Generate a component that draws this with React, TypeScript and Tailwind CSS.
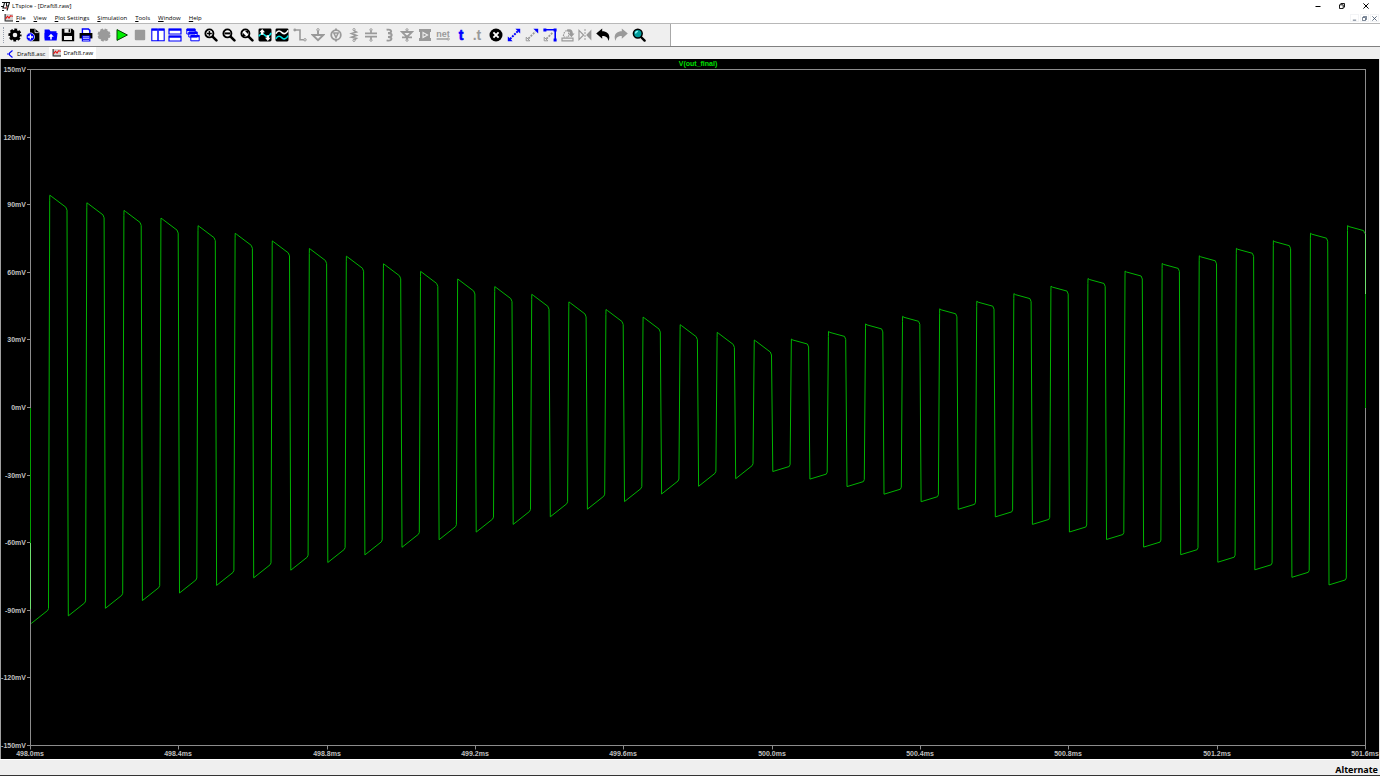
import type { ReactNode } from "react";
import { clsx } from "clsx";

const BLUE = "#0000ff";
const GREY = "#9a9a9a";

const menus = ["File", "View", "Plot Settings", "Simulation", "Tools", "Window", "Help"];

type Tool = { label: string; icon: ReactNode; disabled?: boolean };

function Lens({ children }: { children?: ReactNode }) {
  return (
    <>
      <circle cx="5.4" cy="5.4" r="4" fill="#fff" stroke="#000" strokeWidth="1.9" />
      <path d="M8.6 8.6 12.4 12.4" stroke="#000" strokeWidth="2.6" strokeLinecap="round" />
      {children}
    </>
  );
}

const tools: Tool[] = [
  {
    label: "Settings",
    icon: (
      <>
        <circle cx="7" cy="7" r="3.8" fill="none" stroke="#000" strokeWidth="3" />
        <circle cx="7" cy="7" r="5.5" fill="none" stroke="#000" strokeWidth="2.2" strokeDasharray="2.7 1.62" strokeDashoffset="1.3" />
      </>
    ),
  },
  {
    label: "New Schematic",
    icon: (
      <>
        <path d="M4 .8h5l4.4 3.6v8.8H4z" fill="#000" />
        <path d="M9 1v3.6h3.8" fill="none" stroke="#efefef" strokeWidth=".8" />
        <circle cx="4.4" cy="9" r="4.2" fill={BLUE} stroke="#efefef" strokeWidth=".7" />
        <path d="M4.4 6.4v5.2M1.8 9H7" stroke="#fff" strokeWidth="1.3" />
      </>
    ),
  },
  {
    label: "Open",
    icon: (
      <>
        <path d="M.6 1.6h4.6l1.3 1.6h6V6H3L.6 11z" fill={BLUE} />
        <path d="M.6 12.6V5h13l-1 7.6z" fill={BLUE} />
        <path d="M7 11.4V7.6" stroke="#fff" strokeWidth="1.6" />
        <path d="M4.2 8.8 7 5.8l2.8 3z" fill="#fff" />
      </>
    ),
  },
  {
    label: "Save",
    icon: (
      <>
        <path d="M.8.8h10.4l2 2v10.4H.8z" fill="#000" />
        <path d="M3.4.8h6.4v4H3.4zM3 8h8v4H3z" fill="#efefef" />
        <path d="M7.6 1.2h1.4v3H7.6z" fill="#000" />
      </>
    ),
  },
  {
    label: "Print",
    icon: (
      <>
        <path d="M3.4 5V1h6l1.4 1.4V5" fill="#fff" stroke={BLUE} strokeWidth="1.4" />
        <path d="M.6 5h12.8v5.4H.6z" fill="#000" />
        <path d="M3.4 8h7.4v5H3.4z" fill="#fff" stroke={BLUE} strokeWidth="1.2" />
        <path d="M4 9.8h6M4 11.4h6" stroke={BLUE} />
      </>
    ),
  },
  {
    label: "Configure Analysis",
    disabled: true,
    icon: (
      <>
        <circle cx="7" cy="7" r="5.6" fill={GREY} />
        <circle cx="7" cy="7" r="5.7" fill="none" stroke={GREY} strokeWidth="1.6" strokeDasharray="2.8 1.68" />
      </>
    ),
  },
  {
    label: "Run",
    icon: <path d="M2 1.6 12.4 7 2 12.4z" fill="#00f000" stroke="#044004" strokeWidth="1" strokeLinejoin="round" />,
  },
  { label: "Stop", disabled: true, icon: <rect x="1.8" y="1.8" width="10.4" height="10.4" rx="1" fill={GREY} /> },
  {
    label: "Tile Vertically",
    icon: (
      <>
        <path d="M.8 1h6v11.8h-6zM7.2 1h6v11.8h-6z" fill="#fff" stroke={BLUE} strokeWidth="1.1" />
        <path d="M.8 1.8h5.6M7.6 1.8h5.6" stroke={BLUE} strokeWidth="2" />
      </>
    ),
  },
  {
    label: "Tile Horizontally",
    icon: (
      <>
        <path d="M1 1h12v5H1zM1 8h12v5H1z" fill="#fff" stroke={BLUE} strokeWidth="1.2" />
        <path d="M1 1.8h12M1 8.8h12" stroke={BLUE} strokeWidth="2" />
      </>
    ),
  },
  {
    label: "Cascade",
    icon: (
      <>
        <path d="M.8 1h8.4v5H.8zM2.8 4h8.4v5H2.8zM4.8 7.4h8.4v5.4H4.8z" fill="#fff" stroke={BLUE} />
        <path d="M.8 1.8h8.4M2.8 4.8h8.4M4.8 8.2h8.4" stroke={BLUE} strokeWidth="2.2" />
      </>
    ),
  },
  { label: "Zoom In", icon: <Lens><path d="M5.4 3v4.8M3 5.4h4.8" stroke="#000" strokeWidth="1.5" /></Lens> },
  { label: "Zoom Out", icon: <Lens><path d="M2.6 5.4h5.6" stroke="#000" strokeWidth="2" /></Lens> },
  {
    label: "Zoom to Fit",
    icon: (
      <Lens>
        <path d="M4.8 2.8H8V6zM2.8 4.8V8H6z" fill="#000" />
      </Lens>
    ),
  },
  {
    label: "Autorange",
    icon: (
      <>
        <rect x=".5" y=".5" width="13" height="13" rx="1.4" fill="#000" />
        <path d="M.8 8.4C3 4.6 5 5.4 7 7.4s4 1.4 6.2-2.4" fill="none" stroke="#00e0e0" strokeWidth="1.5" />
        <path d="M4.2 1 7 4.2H5.400v2.600H3V4.200H1.400zM9.800 13 7 9.800h1.600V7.200H11v2.600h1.600z" fill="#fff" />
      </>
    ),
  },
  {
    label: "Add Trace",
    icon: (
      <>
        <rect x=".5" y=".5" width="13" height="13" rx="1.4" fill="#000" />
        <path d="M.8 5.6C3 2 5 2.8 7 4.6s4 1.4 6.2-2.2" fill="none" stroke="#fff" strokeWidth="1.6" />
        <path d="M.8 10.8C3 7.2 5 8 7 9.8s4 1.4 6.2-2.2" fill="none" stroke="#00e0e0" strokeWidth="1.6" />
      </>
    ),
  },
  {
    label: "Wire",
    disabled: true,
    icon: (
      <>
        <path d="M2 2h5v9.8h5" fill="none" stroke={GREY} strokeWidth="1.6" />
        <circle cx="1.8" cy="2" r="1.4" fill={GREY} />
        <circle cx="12" cy="11.8" r="1.2" fill="#efefef" stroke={GREY} />
      </>
    ),
  },
  {
    label: "Ground",
    disabled: true,
    icon: (
      <>
        <path d="M7 2.4V7M1.6 7h10.8L7 12.2z" fill="none" stroke={GREY} strokeWidth="1.9" />
        <circle cx="7" cy="1.8" r="1.2" fill="#efefef" stroke={GREY} />
      </>
    ),
  },
  {
    label: "Voltage Source",
    disabled: true,
    icon: (
      <>
        <circle cx="7" cy="7" r="4.8" fill="none" stroke={GREY} strokeWidth="1.8" />
        <path d="M4.800 5h4.400L7 9.600z" fill="none" stroke={GREY} strokeWidth="1.500" />
        <path d="M7 .4v1.800M7 11.800v1.800" stroke={GREY} strokeWidth="2" />
      </>
    ),
  },
  {
    label: "Resistor",
    disabled: true,
    icon: (
      <>
        <path d="M7 2.6 9.4 4 4.6 5.600l4.800 1.800-4.800 1.800 4.800 1.200L7 12" fill="none" stroke={GREY} strokeWidth="1.6" />
        <circle cx="7" cy="1.6" r="1.1" fill="#efefef" stroke={GREY} />
        <circle cx="7" cy="12.4" r="1.1" fill="#efefef" stroke={GREY} />
      </>
    ),
  },
  {
    label: "Capacitor",
    disabled: true,
    icon: (
      <>
        <path d="M1 5.4h12M1 8.6h12M7 2.4v3M7 8.6v3" stroke={GREY} strokeWidth="1.7" />
        <circle cx="7" cy="1.8" r="1.1" fill="#efefef" stroke={GREY} />
        <circle cx="7" cy="12.2" r="1.1" fill="#efefef" stroke={GREY} />
      </>
    ),
  },
  {
    label: "Inductor",
    disabled: true,
    icon: (
      <path
        d="M4.6 1.8C10.4.6 10.4 5.4 6 5.2c5 0 5 3.8 0 3.8 5-.2 4.6 4.6-1.400 3.400"
        fill="none"
        stroke={GREY}
        strokeWidth="1.9"
      />
    ),
  },
  {
    label: "Diode",
    disabled: true,
    icon: (
      <>
        <path d="M2 4h10L7 9zM2 9.4h10M7 2.2v2M7 9.4v2" fill="none" stroke={GREY} strokeWidth="1.8" />
        <circle cx="7" cy="1.8" r="1.1" fill="#efefef" stroke={GREY} />
        <circle cx="7" cy="12.2" r="1.1" fill="#efefef" stroke={GREY} />
      </>
    ),
  },
  {
    label: "Component",
    disabled: true,
    icon: (
      <>
        <path d="M1 1h12v3h-1v6h1v3H1v-3h1V4H1z" fill={GREY} />
        <path d="M5 4.4 9.6 7 5 9.6z" fill={GREY} stroke="#efefef" strokeWidth="1.1" />
      </>
    ),
  },
  {
    label: "Net Name",
    disabled: true,
    icon: (
      <>
        <text x="7" y="8.6" textAnchor="middle" className="font-['Liberation_Sans'] text-[9px] font-bold" fill={GREY}>
          net
        </text>
        <path d="M.6 11h10.8" stroke={GREY} strokeWidth="1.4" />
        <circle cx="12.2" cy="11" r="1.1" fill="#efefef" stroke={GREY} />
      </>
    ),
  },
  {
    label: "Text",
    icon: (
      <text x="7" y="12" textAnchor="middle" className="font-['Liberation_Sans'] text-[14px] font-bold" fill={BLUE} stroke={BLUE} strokeWidth=".6">
        t
      </text>
    ),
  },
  {
    label: "SPICE Directive",
    disabled: true,
    icon: (
      <text x="6" y="12" textAnchor="middle" className="font-['Liberation_Sans'] text-[14px] font-bold" fill={GREY}>
        .t
      </text>
    ),
  },
  {
    label: "Delete",
    icon: (
      <>
        <circle cx="7" cy="7" r="6.5" fill="#000" />
        <path d="m4.4 4.4 5.2 5.2M9.6 4.4 4.4 9.6" stroke="#fff" strokeWidth="1.900" />
      </>
    ),
  },
  {
    label: "Move",
    icon: (
      <>
        <path d="m3 11 8-8" stroke={BLUE} strokeWidth="2" strokeDasharray="2 1" />
        <path d="M8.4.8h4.8v4.8zM.8 8.4v4.8h4.8z" fill={BLUE} />
      </>
    ),
  },
  {
    label: "Duplicate",
    icon: (
      <>
        <path d="m3.4 10.6 7-7" stroke={GREY} strokeWidth="1.8" strokeDasharray="2 1.2" />
        <path d="M8.4.8h4.8v4.8z" fill={BLUE} />
        <path d="M1.2 9.2v3.6h3.6z" fill="none" stroke={GREY} />
      </>
    ),
  },
  {
    label: "Drag",
    icon: (
      <>
        <path d="m3.4 10.8 6-6" stroke={GREY} strokeWidth="1.8" strokeDasharray="2 1.2" />
        <path d="M1.2 9.2v3.6h3.6z" fill="none" stroke={GREY} />
        <path d="M1.8 1.8h10.4v9.8" fill="none" stroke={BLUE} strokeWidth="1.6" />
        <path d="M.4.4h3v3h-3zM10.600.4h3v3h-3zM10.600 10.600h3v3h-3z" fill={BLUE} />
      </>
    ),
  },
  {
    label: "Rotate",
    disabled: true,
    icon: (
      <>
        <path d="M6 1.600c4.400-1.200 6 1.200 5.800 4h1.800L10.400 9.200 7.200 5.600H9C9 4 8 3.200 6 3.600z" fill={GREY} />
        <path d="M5.600 2.400C3.600 3.600 2.400 5.600 2.400 9h5.200V2.400" fill="none" stroke={GREY} strokeDasharray="1.600 1" strokeWidth="1.2" />
        <path d="M1 10.200h11v2.600H1z" fill="none" stroke={GREY} strokeWidth="1.2" />
      </>
    ),
  },
  {
    label: "Mirror",
    disabled: true,
    icon: (
      <>
        <path d="M1 2.4v9.2L5.6 7z" fill="none" stroke={GREY} strokeWidth="1.2" />
        <path d="M13.4 1.600v10.800L8.200 7z" fill={GREY} />
        <path d="M7 1v12" stroke={GREY} strokeDasharray="2 1" />
      </>
    ),
  },
  {
    label: "Undo",
    icon: <path d="M.2 5.400 6.200.4v2.800c5.800 0 8.800 4.400 6.200 9.800-.4-3.600-2.200-5-6.200-5v2.800z" fill="#000" />,
  },
  {
    label: "Redo",
    disabled: true,
    icon: <path d="M13.800 5.400 7.800.4v2.800C2 3.200-1 7.600 1.600 13c.4-3.600 2.200-5 6.200-5v2.800z" fill={GREY} />,
  },
  {
    label: "Find",
    icon: (
      <>
        <path d="m9 9 3.6 3.6" stroke="#000" strokeWidth="2.4" strokeLinecap="round" />
        <circle cx="5.8" cy="5.6" r="4.4" fill="#009c9c" stroke="#000" strokeWidth="1.5" />
        <path d="M3.6 5.6c0-1.4 1-2.2 2.2-2.2" fill="none" stroke="#9ff" strokeWidth="1.2" />
      </>
    ),
  },
];

function PlotIcon() {
  return (
    <svg viewBox="0 0 9 9" className="h-2 w-[9px] shrink-0" preserveAspectRatio="none" aria-hidden="true">
      <rect width="9" height="9" fill="#d4d4d4" />
      <path d="M1.2 0v7.8H9" fill="none" stroke="#222" />
      <path d="m1.500 5.500 2-3 1.500 2 1.500-2.500L9 2.500" fill="none" stroke="#e81010" strokeWidth="1.1" />
    </svg>
  );
}

// plot area in svg units
const LEFT = 30.5;
const RIGHT = 1365.5;
const TOP = 10.5;
const BOTTOM = 686.5;
const ZERO = 348.5;
const PERIOD = 37.08;

const yLabels = [150, 120, 90, 60, 30, 0, -30, -60, -90, -120, -150];
const xLabels = ["498.0", "498.4", "498.8", "499.2", "499.6", "500.0", "500.4", "500.8", "501.2", "501.6"];

const yPos = (mv: number) => Math.floor(ZERO - mv * 2.2533);
const xPos = (i: number) => Math.floor(LEFT + i * 148.33);

function tracePath() {
  const pts: [number, number][] = [];
  for (let k = 0; k < 36; k++) {
    const x = LEFT + 0.7 + k * PERIOD;
    const falling = k < 20;
    const low = falling ? 564.5 - k * 7.62 : 412.5 + (k - 20) * 7.56;
    const high = falling ? 136.2 + k * 7.62 : 280 - (k - 20) * 7.56;
    const lowDrop = falling ? 13 : 5;
    const highDrop = falling ? 13 : 6;
    pts.push([x, low], [x + 16.4, low - lowDrop], [x + 17.3, low - lowDrop - 2]);
    pts.push([x + 18.5, high + 5], [x + 18.6, high], [x + 20, high + 1]);
    pts.push([x + 34.6, high + highDrop - 1], [Math.min(x + 35.8, RIGHT), high + highDrop + 2]);
  }
  return "M" + pts.map(([x, y]) => `${x.toFixed(1)} ${y.toFixed(1)}`).join("L");
}

function Waveform() {
  return (
    <svg
      viewBox="0 0 1380 700"
      className="block w-full bg-black font-['Liberation_Sans',sans-serif] text-[7px] font-bold"
      role="img"
      aria-label="V(out_final)"
    >
      <path d="M.5 0v700" stroke="#a0a0a0" />
      <path d="M1379.5 0v700" stroke="#e4e4e4" />
      <g fill="none" stroke="#8c8c8c">
        <rect x={LEFT} y={TOP} width={RIGHT - LEFT} height={BOTTOM - TOP} />
        {yLabels.map((v) => (
          <path key={v} d={`M27 ${yPos(v) + 0.5}H${LEFT}`} />
        ))}
        {xLabels.map((v, i) => (
          <path key={v} d={`M${xPos(i) + 0.5} ${BOTTOM}v4`} />
        ))}
      </g>
      <g fill="#c0c0c0">
        {yLabels.map((v) => (
          <text key={v} x="26" y={yPos(v) + 3} textAnchor="end">
            {v}mV
          </text>
        ))}
        {xLabels.map((v, i) => (
          <text key={v} x={xPos(i)} y="697" textAnchor="middle">
            {v}ms
          </text>
        ))}
      </g>
      <text x="698" y="7" textAnchor="middle" fill="#00e000">
        V(out_final)
      </text>
      <path d={tracePath()} fill="none" stroke="#00b400" strokeLinejoin="round" />
      <path d={`M${LEFT} 349V484M${RIGHT} 235V349`} stroke="#00a000" />
      <path d={`M${LEFT} 484V550M${RIGHT} 175V235`} stroke="#6ee06e" />
    </svg>
  );
}

function WindowButtons({ small = false }: { small?: boolean }) {
  const box = clsx("flex items-center justify-center", small ? "h-2 w-[9px] border border-gray-100 text-slate-600" : "h-3 w-6 text-black");
  const size = small ? "size-[5px]" : "size-[6px]";
  return (
    <div className={clsx("flex", small ? "gap-px pr-px" : "pr-0.5")}>
      <button type="button" aria-label="Minimize" className={box}>
        <svg viewBox="0 0 6 6" className={size}>
          <path d={small ? "M1 5h4" : "M.5 3.5h5"} stroke="currentColor" />
        </svg>
      </button>
      <button type="button" aria-label="Restore" className={box}>
        <svg viewBox="0 0 6 6" className={size}>
          <path d="M.5 1.8h3.7v3.7H.5zM1.8 1.500V.5h3.700v3.700h-1" fill="none" stroke="currentColor" strokeWidth=".9" />
        </svg>
      </button>
      <button type="button" aria-label="Close" className={box}>
        <svg viewBox="0 0 6 6" className={size}>
          <path d="m.4.4 5.2 5.2M5.6.4.4 5.6" stroke="currentColor" strokeWidth="1" />
        </svg>
      </button>
    </div>
  );
}

export default function App() {
  return (
    <div className="min-h-screen bg-white font-['Open_Sans',sans-serif] text-[6px] leading-none text-black">
      <header className="flex h-3 items-center justify-between">
        <div className="flex items-center gap-0.5 pl-px">
          <svg viewBox="0 0 9 9" className="size-[9px]" aria-hidden="true">
            <path d="M1 .5h7.500L6 8.500M3.500 1 2 6h3M5.500 1v3h2M0 4.500h2M1 8.500h2" fill="none" stroke="#111" strokeWidth="1.100" />
            <path d="M5.500 4.500 5 7" stroke="#b02020" />
          </svg>
          <h1 className="whitespace-nowrap">LTspice - [Draft8.raw]</h1>
        </div>
        <WindowButtons />
      </header>

      <div className="flex h-[11px] items-center justify-between pt-px">
        <nav className="flex items-center gap-2 pl-1">
          <div className="-mr-[5px]">
            <PlotIcon />
          </div>
          {menus.map((m) => (
            <button key={m} type="button" className="whitespace-nowrap">
              <span className="underline decoration-1 underline-offset-1">{m[0]}</span>
              {m.slice(1)}
            </button>
          ))}
        </nav>
        <WindowButtons small />
      </div>

      <div className="flex h-6 border-y border-t-[#b8b8b8] border-b-[#808080]">
        <div className="flex items-center border-r border-[#a8a8a8] bg-[#efefef] pr-[22px] pl-[3px]">
          <div className="h-4 border-l border-dotted border-gray-400 pr-0.5" />
          <div className="flex w-[642px]">
            {tools.map((t) => (
              <button key={t.label} type="button" aria-label={t.label} disabled={t.disabled} className="flex flex-1 justify-center">
                <svg viewBox="0 0 14 14" className="size-3.5">
                  {t.icon}
                </svg>
              </button>
            ))}
          </div>
        </div>
      </div>

      <div className="flex h-3 items-stretch bg-[#efefef] pl-[7px]" role="tablist">
        <button type="button" role="tab" aria-selected="false" className="flex items-center gap-[3px] pt-0.5 pr-1">
          <svg viewBox="0 0 7 8" className="h-2 w-[7px]" aria-hidden="true">
            <path d="M5.5.5 2.500 3v2l3 2.500M0 4h2.500" fill="none" stroke={BLUE} strokeWidth="1.1" />
          </svg>
          Draft8.asc
        </button>
        <button type="button" role="tab" aria-selected="true" className="flex items-center gap-0.5 bg-white px-[3px]">
          <PlotIcon />
          Draft8.raw
        </button>
      </div>

      <main>
        <Waveform />
      </main>

      <footer className="flex h-[17px] items-center justify-end border-t border-b border-t-white border-b-[#333] bg-[#efefef] pt-1 pr-0.5 font-['Noto_Sans',sans-serif] text-[9px] font-bold">
        Alternate
      </footer>
    </div>
  );
}
